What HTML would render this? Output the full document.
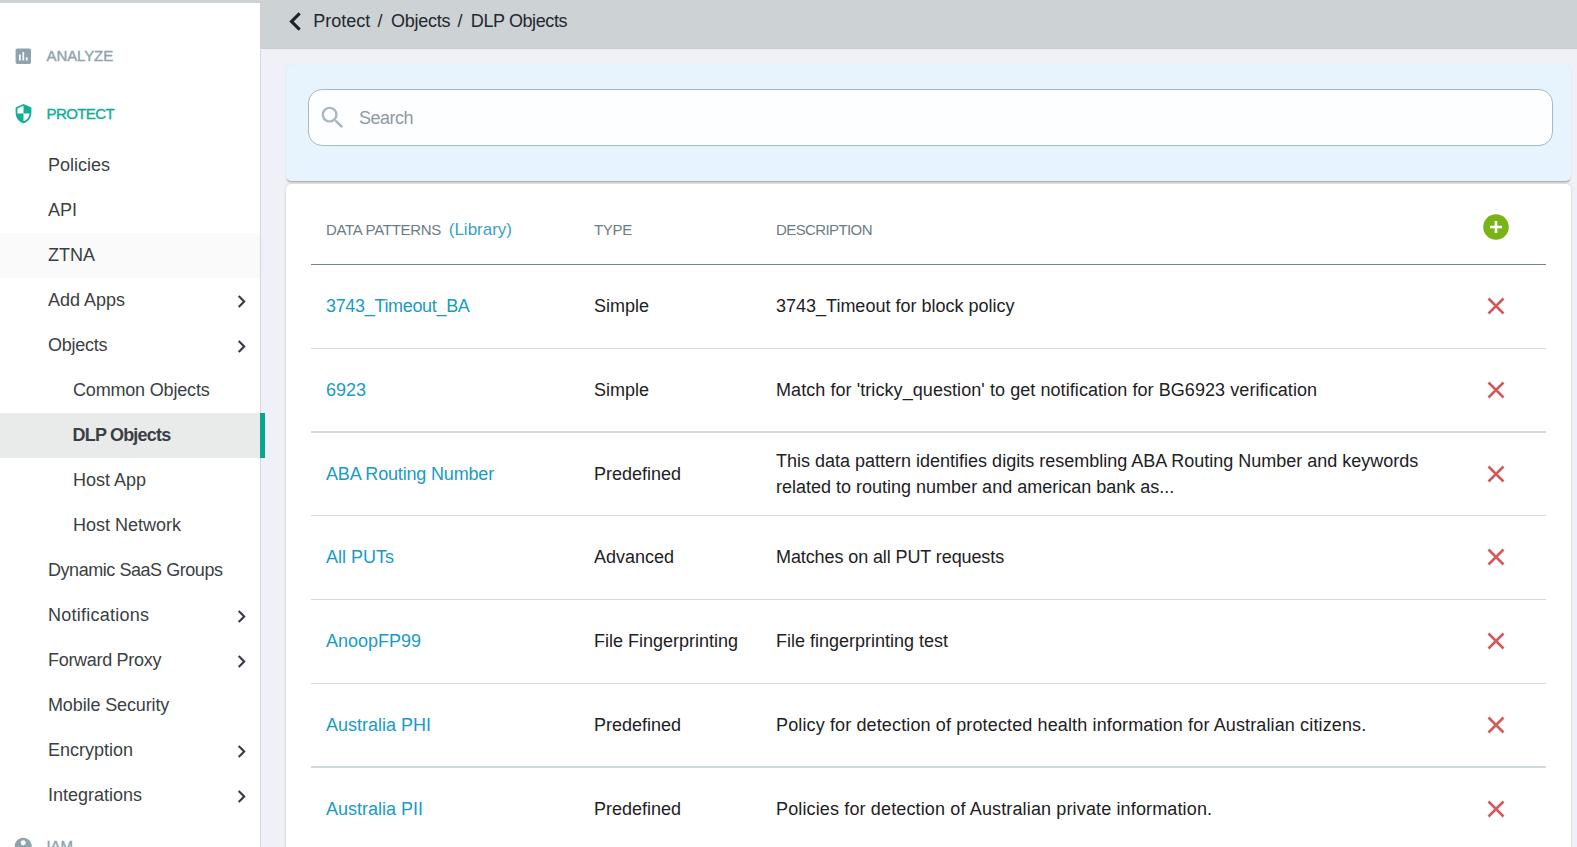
<!DOCTYPE html>
<html><head><meta charset="utf-8">
<style>
*{box-sizing:border-box;margin:0;padding:0}
html,body{width:1577px;height:847px;overflow:hidden;background:#f0f0f8;font-family:"Liberation Sans",sans-serif}
.abs{position:absolute}
#topstrip{left:0;top:0;width:260px;height:3px;background:#cdd2d5}
#side{left:0;top:3px;width:260px;height:844px;background:#fff}
#sideborder{left:260px;top:48px;width:1px;height:799px;background:#d3dadd}
.sh{position:absolute;left:0;width:260px;height:45px;font-size:15px;font-weight:bold;letter-spacing:0.6px}
.si{position:absolute;left:0;width:260px;height:45px;font-size:18px;color:#3a3f44;line-height:45px;padding-left:48px;white-space:nowrap}
.si.sub{padding-left:73px}
.chev{position:absolute;left:238px;top:16px}
#crumb{left:260px;top:0;width:1317px;height:49px;background:#cdd2d5;border-bottom:1px solid #c7cccf}
.crumbt{top:0;font-size:18px;color:#1f2830;line-height:42px;white-space:nowrap}
#crumb .t{position:absolute;left:314px;top:0;font-size:18px;color:#222b33;line-height:42px;white-space:nowrap}
#scard{left:286px;top:65px;width:1285px;height:116px;background:#e8f4fd;border-radius:5px;box-shadow:0 2px 2px -1px rgba(0,0,0,.36),0 0 1px rgba(0,0,0,.08)}
#sinput{left:308px;top:89px;width:1245px;height:57px;border:1px solid #a9b8bf;border-radius:14px;background:#fdfeff}
#sinput .ph{position:absolute;left:50px;top:0;line-height:56px;font-size:18px;letter-spacing:-0.5px;color:#8e9ba1}
#tcard{left:286px;top:184px;width:1285px;height:700px;background:#fff;border-radius:5px;box-shadow:0 0 3px rgba(0,0,0,.18)}
.hd{position:absolute;top:214.5px;font-size:15px;color:#6c7c84;line-height:30px;white-space:nowrap;letter-spacing:-0.3px}
.hline{left:311px;width:1235px;height:1px}
.row{position:absolute;left:0;width:1577px;height:84px;font-size:18px;white-space:nowrap}
.row .c1{position:absolute;left:326px;top:0;line-height:84px;color:#179bc6}
.row .c2{position:absolute;left:594px;top:0;line-height:84px;color:#1e2124}
.row .c3{position:absolute;left:776px;top:0;line-height:84px;color:#1e2124}
.row .x{position:absolute;left:1487px;top:33px}
</style></head><body>
<div id="topstrip" class="abs"></div>
<div id="side" class="abs"></div>
<div id="crumb" class="abs">
</div>
<svg class="abs" style="left:276.6px;top:2.85px" width="37" height="37" viewBox="0 0 24 24"><path fill="#1c232b" d="M15.41 7.41L14 6l-6 6 6 6 1.41-1.41L10.83 12z"/></svg>
<div class="abs crumbt" style="left:313.2px">Protect</div>
<div class="abs crumbt" style="left:377.5px">/</div>
<div class="abs crumbt" style="left:391px;letter-spacing:-0.25px">Objects</div>
<div class="abs crumbt" style="left:457.5px">/</div>
<div class="abs crumbt" style="left:470.8px;letter-spacing:-0.4px">DLP Objects</div>
<div id="sideborder" class="abs"></div>

<!-- sidebar headers -->
<svg class="abs" style="left:13.4px;top:46.1px" width="20.6" height="20.6" viewBox="0 0 24 24"><path fill="#8fa3ad" d="M19 3H5c-1.1 0-2 .9-2 2v14c0 1.1.9 2 2 2h14c1.1 0 2-.9 2-2V5c0-1.1-.9-2-2-2zM9 17H7v-7h2v7zm4 0h-2V7h2v10zm4 0h-2v-4h2v4z"/></svg>
<div class="abs" style="left:46.5px;top:45.5px;font-size:15px;color:#8fa3ad;letter-spacing:-0.1px;-webkit-text-stroke:0.4px #8fa3ad;line-height:20px">ANALYZE</div>
<svg class="abs" style="left:13.1px;top:102.9px" width="21" height="21" viewBox="0 0 24 24"><path fill="#0fae98" fill-rule="evenodd" d="M12 1L3 5v6c0 5.55 3.84 10.74 9 12 5.16-1.26 9-6.45 9-12V5l-9-4zm0 10.99h7c-.53 4.12-3.28 7.79-7 8.94V12H5V6.3l7-3.11v8.8z"/></svg>
<div class="abs" style="left:46.5px;top:103.5px;font-size:15px;color:#0fae98;letter-spacing:-0.6px;-webkit-text-stroke:0.4px #0fae98;line-height:20px">PROTECT</div>
<svg class="abs" style="left:13.3px;top:835.8px" width="20.5" height="20.5" viewBox="0 0 24 24"><path fill="#8fa3ad" d="M12 2C6.48 2 2 6.480 2 12s4.48 10 10 10 10-4.48 10-10S17.52 2 12 2zm0 3c1.66 0 3 1.34 3 3s-1.340 3-3 3-3-1.34-3-3 1.34-3 3-3zm0 14.2c-2.5 0-4.71-1.28-6-3.22.03-1.99 4-3.08 6-3.08 1.99 0 5.970 1.09 6 3.08-1.29 1.94-3.5 3.22-6 3.22z"/></svg>
<div class="abs" style="left:46.5px;top:835.5px;font-size:15px;color:#8fa3ad;letter-spacing:-0.1px;-webkit-text-stroke:0.4px #8fa3ad;line-height:20px">IAM</div>
<div class="si" style="top:143px">Policies</div>
<div class="si" style="top:188px">API</div>
<div class="si" style="top:233px;background:#fafafa">ZTNA</div>
<div class="si" style="top:278px">Add Apps</div>
<div class="si" style="top:323px;letter-spacing:-0.25px">Objects</div>
<div class="si sub" style="top:368px;letter-spacing:-0.18px">Common Objects</div>
<div class="si sub" style="top:413px;background:#e9ebeb;font-weight:bold;letter-spacing:-0.8px;padding-left:72.5px">DLP Objects</div>
<div class="abs" style="left:260px;top:413px;width:5px;height:45px;background:#0aa58f"></div>
<div class="si sub" style="top:458px">Host App</div>
<div class="si sub" style="top:503px">Host Network</div>
<div class="si" style="top:548px;letter-spacing:-0.45px">Dynamic SaaS Groups</div>
<div class="si" style="top:593px;letter-spacing:0.25px">Notifications</div>
<div class="si" style="top:638px;letter-spacing:-0.3px">Forward Proxy</div>
<div class="si" style="top:683px;letter-spacing:-0.12px">Mobile Security</div>
<div class="si" style="top:728px">Encryption</div>
<div class="si" style="top:773px">Integrations</div>

<svg class="abs" style="left:229.4px;top:289px" width="25" height="25" viewBox="0 0 24 24"><path fill="#333a44" d="M10 6L8.59 7.41 13.17 12l-4.58 4.59L10 18l6-6z"/></svg>
<svg class="abs" style="left:229.4px;top:334px" width="25" height="25" viewBox="0 0 24 24"><path fill="#333a44" d="M10 6L8.59 7.41 13.17 12l-4.58 4.59L10 18l6-6z"/></svg>
<svg class="abs" style="left:229.4px;top:604px" width="25" height="25" viewBox="0 0 24 24"><path fill="#333a44" d="M10 6L8.59 7.41 13.17 12l-4.58 4.59L10 18l6-6z"/></svg>
<svg class="abs" style="left:229.4px;top:649px" width="25" height="25" viewBox="0 0 24 24"><path fill="#333a44" d="M10 6L8.59 7.41 13.17 12l-4.58 4.59L10 18l6-6z"/></svg>
<svg class="abs" style="left:229.4px;top:739px" width="25" height="25" viewBox="0 0 24 24"><path fill="#333a44" d="M10 6L8.59 7.41 13.17 12l-4.58 4.59L10 18l6-6z"/></svg>
<svg class="abs" style="left:229.4px;top:784px" width="25" height="25" viewBox="0 0 24 24"><path fill="#333a44" d="M10 6L8.59 7.41 13.17 12l-4.58 4.59L10 18l6-6z"/></svg>
<!-- main cards -->
<div id="scard" class="abs"></div>
<div id="sinput" class="abs"><svg class="abs" style="left:9.2px;top:13.2px" width="29.4" height="29.4" viewBox="0 0 24 24"><path fill="#a9b8bf" d="M15.5 14h-.79l-.28-.27C15.41 12.590 16 11.11 16 9.5 16 5.91 13.09 3 9.5 3S3 5.91 3 9.5 5.91 16 9.5 16c1.61 0 3.09-.59 4.23-1.57l.27.28v.79l5 4.99L20.49 19l-4.99-5zm-6 0C7.01 14 5 11.99 5 9.5S7.01 5 9.5 5 14 7.01 14 9.5 11.99 14 9.5 14z"/></svg><span class="ph">Search</span></div>
<div id="tcard" class="abs"></div>
<!-- table header -->
<div class="hd" style="left:326px">DATA PATTERNS&nbsp; <span style="color:#3d9fc2;font-size:17px;letter-spacing:0">(Library)</span></div>
<div class="hd" style="left:594px">TYPE</div>
<div class="hd" style="left:776px;letter-spacing:-0.6px">DESCRIPTION</div>
<div class="abs" style="left:1483px;top:214px"><svg width="26" height="26" viewBox="0 0 26 26"><circle cx="13" cy="13" r="12.8" fill="#7ab317"/><path d="M7 13H19M13 7V19" stroke="#fff" stroke-width="2.6"/></svg></div>
<div class="abs hline" style="top:264px;background:#6f8791"></div>
<div class="abs hline" style="top:348px;height:1px;background:#d3dce0"></div>
<div class="abs hline" style="top:431px;height:2px;background:#d0d9dd"></div>
<div class="abs hline" style="top:515px;height:1px;background:#d3dce0"></div>
<div class="abs hline" style="top:599px;height:1px;background:#d3dce0"></div>
<div class="abs hline" style="top:683px;height:1px;background:#d3dce0"></div>
<div class="abs hline" style="top:766px;height:2px;background:#d0d9dd"></div>
<div class="row" style="top:264px"><div class="c1" style="letter-spacing:-0.33px">3743_Timeout_BA</div><div class="c2">Simple</div><div class="c3">3743_Timeout for block policy</div><svg class="x" width="18" height="18" viewBox="0 0 18 18"><path d="M1.5 1.5L16.5 16.5M16.5 1.5L1.5 16.5" stroke="#d0595b" stroke-width="2.6"/></svg></div>
<div class="row" style="top:348px"><div class="c1">6923</div><div class="c2">Simple</div><div class="c3" style="letter-spacing:0.07px">Match for 'tricky_question' to get notification for BG6923 verification</div><svg class="x" width="18" height="18" viewBox="0 0 18 18"><path d="M1.5 1.5L16.5 16.5M16.5 1.5L1.5 16.5" stroke="#d0595b" stroke-width="2.6"/></svg></div>
<div class="row" style="top:432px"><div class="c1" style="letter-spacing:-0.17px">ABA Routing Number</div><div class="c2">Predefined</div><div class="c3" style="line-height:26px;top:16px">This data pattern identifies digits resembling ABA Routing Number and keywords<br>related to routing number and american bank as...</div><svg class="x" width="18" height="18" viewBox="0 0 18 18"><path d="M1.5 1.5L16.5 16.5M16.5 1.5L1.5 16.5" stroke="#d0595b" stroke-width="2.6"/></svg></div>
<div class="row" style="top:515px"><div class="c1">All PUTs</div><div class="c2">Advanced</div><div class="c3" style="letter-spacing:-0.1px">Matches on all PUT requests</div><svg class="x" width="18" height="18" viewBox="0 0 18 18"><path d="M1.5 1.5L16.5 16.5M16.5 1.5L1.5 16.5" stroke="#d0595b" stroke-width="2.6"/></svg></div>
<div class="row" style="top:599px"><div class="c1">AnoopFP99</div><div class="c2">File Fingerprinting</div><div class="c3">File fingerprinting test</div><svg class="x" width="18" height="18" viewBox="0 0 18 18"><path d="M1.5 1.5L16.5 16.5M16.5 1.5L1.5 16.5" stroke="#d0595b" stroke-width="2.6"/></svg></div>
<div class="row" style="top:683px"><div class="c1">Australia PHI</div><div class="c2">Predefined</div><div class="c3" style="letter-spacing:0.13px">Policy for detection of protected health information for Australian citizens.</div><svg class="x" width="18" height="18" viewBox="0 0 18 18"><path d="M1.5 1.5L16.5 16.5M16.5 1.5L1.5 16.5" stroke="#d0595b" stroke-width="2.6"/></svg></div>
<div class="row" style="top:767px"><div class="c1">Australia PII</div><div class="c2">Predefined</div><div class="c3" style="letter-spacing:0.14px">Policies for detection of Australian private information.</div><svg class="x" width="18" height="18" viewBox="0 0 18 18"><path d="M1.5 1.5L16.5 16.5M16.5 1.5L1.5 16.5" stroke="#d0595b" stroke-width="2.6"/></svg></div>

</body></html>
